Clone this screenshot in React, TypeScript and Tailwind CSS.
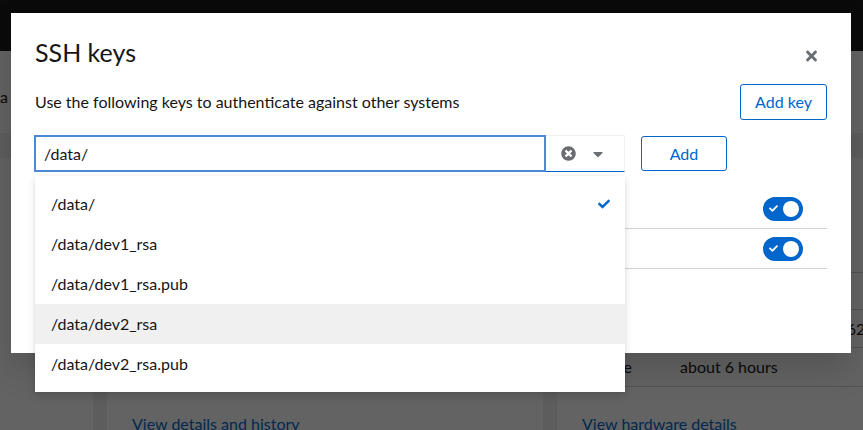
import React from 'react';

const OPTIONS = ['/data/', '/data/dev1_rsa', '/data/dev1_rsa.pub', '/data/dev2_rsa', '/data/dev2_rsa.pub'];

function TimesIcon({ className }: { className?: string }) {
  return (
    <svg viewBox="0 0 352 512" className={className} fill="currentColor" aria-hidden>
      <path d="M242.72 256l100.07-100.07c12.28-12.28 12.28-32.19 0-44.48l-22.24-22.240c-12.28-12.28-32.19-12.28-44.48 0L176 189.28 75.93 89.21c-12.28-12.28-32.19-12.28-44.48 0L9.21 111.45c-12.28 12.28-12.28 32.19 0 44.48L109.28 256 9.21 356.07c-12.28 12.28-12.28 32.19 0 44.48l22.24 22.24c12.28 12.28 32.2 12.28 44.48 0L176 322.72l100.07 100.07c12.28 12.28 32.2 12.28 44.48 0l22.24-22.24c12.28-12.28 12.28-32.19 0-44.48L242.72 256z" />
    </svg>
  );
}

function TimesCircleIcon({ className }: { className?: string }) {
  return (
    <svg viewBox="0 0 512 512" className={className} fill="currentColor" aria-hidden>
      <path d="M256 8C119 8 8 119 8 256s111 248 248 248 248-111 248-248S393 8 256 8zm121.6 313.1c4.7 4.7 4.7 12.3 0 17L338 377.6c-4.7 4.7-12.3 4.7-17 0L256 312l-65.1 65.6c-4.7 4.7-12.3 4.7-17 0L134.4 338c-4.7-4.7-4.7-12.3 0-17l65.6-65-65.6-65.1c-4.7-4.7-4.7-12.3 0-17l39.6-39.6c4.7-4.7 12.3-4.7 17 0l65 65.7 65.1-65.6c4.7-4.7 12.3-4.7 17 0l39.6 39.6c4.7 4.7 4.7 12.3 0 17L312 256l65.6 65.1z" />
    </svg>
  );
}

function CaretDownIcon({ className }: { className?: string }) {
  return (
    <svg viewBox="0 0 320 512" className={className} fill="currentColor" aria-hidden>
      <path d="M31.3 192h257.3c17.8 0 26.7 21.5 14.1 34.1L174.1 354.8c-7.8 7.8-20.5 7.8-28.3 0L17.2 226.1C4.6 213.5 13.5 192 31.3 192z" />
    </svg>
  );
}

function CheckIcon({ className }: { className?: string }) {
  return (
    <svg viewBox="0 0 512 512" className={className} fill="currentColor" aria-hidden>
      <path d="M173.898 439.404l-166.4-166.4c-9.997-9.997-9.997-26.206 0-36.204l36.203-36.204c9.997-9.998 26.207-9.998 36.204 0L192 312.69 432.095 72.596c9.997-9.997 26.207-9.997 36.204 0l36.203 36.204c9.997 9.997 9.997 26.206 0 36.204l-294.4 294.401c-9.998 9.997-26.207 9.997-36.204-.001z" />
    </svg>
  );
}

function Switch() {
  return (
    <div className="w-10 h-6 rounded-full bg-[#0066cc] flex items-center justify-between pl-[6px] pr-[4px]">
      <CheckIcon className="w-[9px] h-[9px] text-white" />
      <span className="w-4 h-4 rounded-full bg-white" />
    </div>
  );
}

function KeyRow({ name }: { name: string }) {
  return (
    <div className="h-10 flex items-center justify-between border-b border-[#d2d2d2] pr-6">
      <span className="text-base">{name}</span>
      <Switch />
    </div>
  );
}

export default function App() {
  return (
    <div className="relative w-[863px] h-[430px] overflow-hidden bg-[#f0f0f0] font-['Lato',sans-serif] text-[#151515]">
      {/* page behind the dialog */}
      <div className="h-[51px] bg-[#151515]" />
      <div className="h-[82px] bg-white pt-[34px] text-base leading-6">a</div>
      <div className="mt-[25px] flex gap-[14px] h-[300px]">
        <div className="w-[93px] shrink-0 bg-white" />
        <div className="w-[436px] shrink-0 bg-white px-[25px] pt-[254px]">
          <span className="text-base leading-6 text-[#0066cc]">View details and history</span>
        </div>
        <div className="flex-1 min-w-0 bg-white pt-[114px] flex flex-col">
          <div className="h-[38px] shrink-0 border-t border-b border-[#d2d2d2] flex items-center pl-[19px] whitespace-nowrap">
            <span className="w-[104px] shrink-0">Model</span>
            <span>QEMU Standard PC</span>
          </div>
          <div className="h-[38px] shrink-0 border-b border-[#d2d2d2] flex items-center pl-[19px] whitespace-nowrap">
            <span className="w-[104px] shrink-0">Machine ID</span>
            <span>8d3f1a90be4c7e2b9d162f0</span>
          </div>
          <div className="h-[39px] shrink-0 border-b border-[#d2d2d2] flex items-center pl-[19px] whitespace-nowrap">
            <span className="w-[104px] shrink-0">Up time</span>
            <span>about 6 hours</span>
          </div>
          <span className="mt-[25px] px-[25px] text-base leading-6 text-[#0066cc]">View hardware details</span>
        </div>
      </div>

      {/* backdrop + modal */}
      <div className="absolute inset-0 bg-[rgba(3,3,3,0.62)] pl-[11px] pt-[13px]">
        <div className="w-[840px] h-[340px] bg-white px-6 pt-6 shadow-[0_16px_32px_0_rgba(3,3,3,0.16)]">
          <div className="h-[31px] flex items-center justify-between">
            <h1 className="text-[25px] leading-[31px]">SSH keys</h1>
            <button className="w-9 h-9 -mr-0.5 translate-y-[3px] flex items-center justify-center text-[#6a6e73]">
              <TimesIcon className="h-4 w-[11px]" />
            </button>
          </div>

          <div className="mt-4 h-9 flex items-center justify-between">
            <p className="text-base leading-6">Use the following keys to authenticate against other systems</p>
            <button className="h-9 w-[87px] border border-[#0066cc] rounded-[3px] text-base text-[#0066cc]">Add key</button>
          </div>

          <div className="mt-[15px] flex items-start">
            <div className="relative w-[590px] h-[37px] flex">
              <div className="flex-1 -ml-px border-2 border-[#4a8ad6] flex items-center pl-2 text-base">/data/</div>
              <div className="w-[79px] flex items-center gap-[17px] pl-[15px] border-t border-r border-[#f0f0f0] border-b border-b-[#0066cc]">
                <TimesCircleIcon className="w-[15px] h-[15px] text-[#6a6e73]" />
                <CaretDownIcon className="w-[10px] h-4 text-[#6a6e73]" />
              </div>
              <div className="absolute left-0 top-[41px] w-[590px] bg-white py-2 z-10 shadow-[0_4px_8px_0_rgba(3,3,3,0.12),0_0_4px_0_rgba(3,3,3,0.06)]">
                {OPTIONS.map((o, i) => (
                  <div key={o} className={`h-10 flex items-center justify-between pl-4 pr-[15px] text-base ${i === 3 ? 'bg-[#f0f0f0]' : ''}`}>
                    <span>{o}</span>
                    {i === 0 && <CheckIcon className="w-3 h-3 text-[#0066cc]" />}
                  </div>
                ))}
              </div>
            </div>
            <button className="ml-4 mt-px w-[86px] h-[35px] border border-[#0066cc] rounded-[3px] text-base text-[#0066cc]">Add</button>
          </div>

          <div className="mt-[17px]">
            <KeyRow name="id_rsa" />
            <KeyRow name="id_ed25519" />
          </div>
        </div>
      </div>
    </div>
  );
}
